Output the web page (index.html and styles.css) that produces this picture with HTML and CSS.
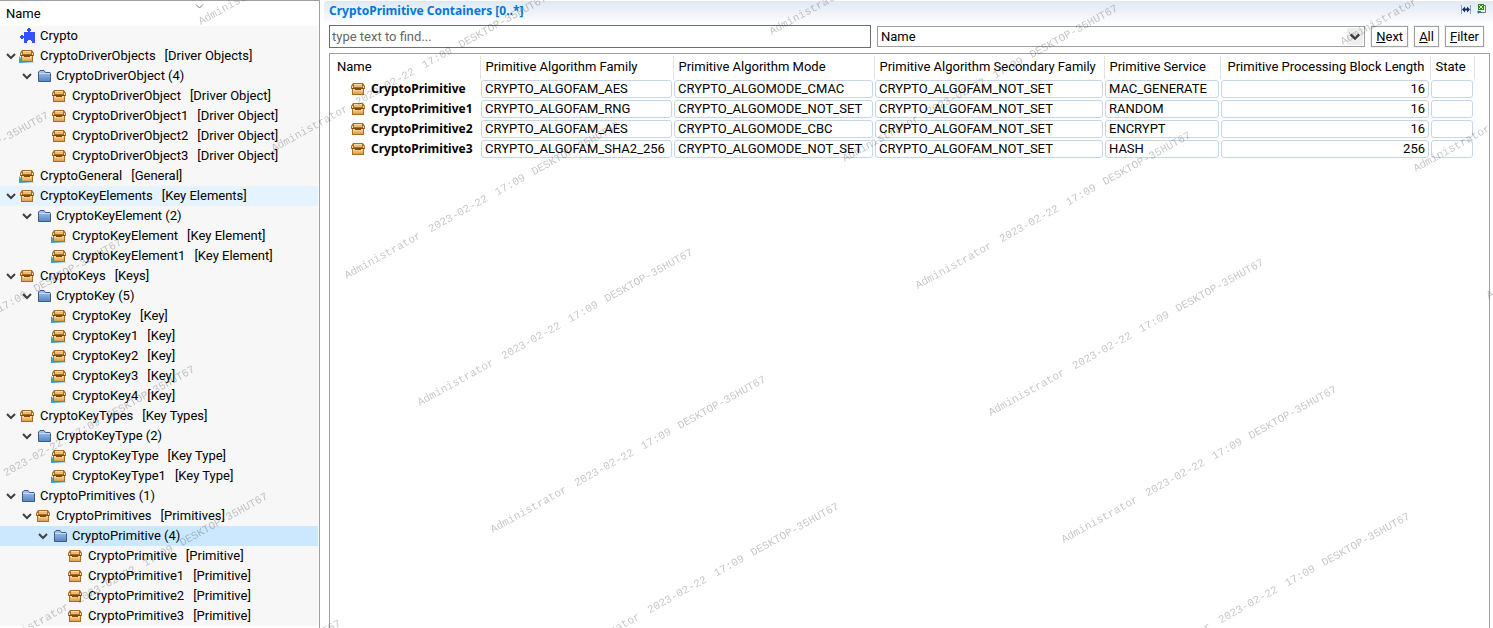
FILE: index.html
```html
<!DOCTYPE html>
<html lang="en">
<head>
    <meta charset="UTF-8">
    <meta name="viewport" content="width=device-width, initial-scale=1.0">
    <title>CryptoPrimitive Containers</title>
    <link rel="stylesheet" href="styles.css">
</head>
<body>
    <!-- Shared icons -->
    <svg class="defs" width="0" height="0" aria-hidden="true">
        <defs>
            <linearGradient id="wood" x1="0" y1="0" x2="0" y2="1">
                <stop offset="0" stop-color="#fbe0a8"/>
                <stop offset="1" stop-color="#d99a48"/>
            </linearGradient>
            <linearGradient id="blue" x1="0" y1="0" x2="0" y2="1">
                <stop offset="0" stop-color="#a9c8ee"/>
                <stop offset="1" stop-color="#5585c4"/>
            </linearGradient>
            <linearGradient id="teal" x1="0" y1="0" x2="1" y2="0">
                <stop offset="0" stop-color="#2f9fc8"/>
                <stop offset="1" stop-color="#d4edf6"/>
            </linearGradient>
            <symbol id="box" viewBox="0 0 16 16">
                <path d="M2 2h10l2 3v3h-1v6H1V8H0V5z" fill="#a86f24"/>
                <path d="M3 3h8v1H3z" fill="#f3dcab"/>
                <path d="M1 5h1v2H1zM12 5h1v2h-1z" fill="#f3dcab"/>
                <path d="M3 4h8v2H3z" fill="#e4bd7c"/>
                <path d="M1 7h12v1H1z" fill="#854a00"/>
                <path d="M2 8h10v5H2z" fill="url(#wood)"/>
                <path d="M4 8h6v1H4z" fill="#854a00"/>
            </symbol>
            <symbol id="boxlink" viewBox="0 0 16 16">
                <path d="M0 8v7h15v-2H4z" fill="url(#teal)"/>
                <use href="#box" x="1" y="0" width="16" height="16"/>
            </symbol>
            <symbol id="folder" viewBox="0 0 16 16">
                <path d="M2.500 13.500v-9.500l1.500-1.500h4l1.500 2h4.500l.5 1v8z" fill="url(#blue)" stroke="#3d5a86"/>
                <path d="M3 5.500h11" stroke="#c9dff7"/>
            </symbol>
            <symbol id="puzzle" viewBox="0 0 16 16">
                <path d="M4 4h4V3H7V1h1V0h2v1h1v2h-1v1h5v11h-3v-2h-1v-1H8v1H7v2H4v-5H3v1H1v-1H0V8h1V7h2v1h1z" fill="#3350fb"/>
            </symbol>
            <symbol id="chevron" viewBox="0 0 14 16">
                <path d="M3 6l4 4 4-4" fill="none" stroke="#404040" stroke-width="2"/>
            </symbol>
        </defs>
    </svg>

    <div class="app">
        <aside class="tree-panel">
            <div class="tree-head">
                <span>Name</span>
                <svg class="sort" width="9" height="5" viewBox="0 0 9 5"><path d="M1 0.500l3.500 3.500L8 0.500" fill="none" stroke="#777"/></svg>
            </div>
            <ul class="tree">
                <li class="node l0"><span class="twist"></span><svg class="icon"><use href="#puzzle"/></svg><span>Crypto</span></li>
                <li class="node l0"><button class="twist" aria-label="Collapse"><svg><use href="#chevron"/></svg></button><svg class="icon link"><use href="#boxlink"/></svg><span>CryptoDriverObjects</span><span class="type">[Driver Objects]</span></li>
                <li class="node l1"><button class="twist" aria-label="Collapse"><svg><use href="#chevron"/></svg></button><svg class="icon"><use href="#folder"/></svg><span>CryptoDriverObject (4)</span></li>
                <li class="node l2"><span class="twist"></span><svg class="icon"><use href="#box"/></svg><span>CryptoDriverObject</span><span class="type">[Driver Object]</span></li>
                <li class="node l2"><span class="twist"></span><svg class="icon"><use href="#box"/></svg><span>CryptoDriverObject1</span><span class="type">[Driver Object]</span></li>
                <li class="node l2"><span class="twist"></span><svg class="icon"><use href="#box"/></svg><span>CryptoDriverObject2</span><span class="type">[Driver Object]</span></li>
                <li class="node l2"><span class="twist"></span><svg class="icon"><use href="#box"/></svg><span>CryptoDriverObject3</span><span class="type">[Driver Object]</span></li>
                <li class="node l0"><span class="twist"></span><svg class="icon link"><use href="#boxlink"/></svg><span>CryptoGeneral</span><span class="type">[General]</span></li>
                <li class="node l0 hover"><button class="twist" aria-label="Collapse"><svg><use href="#chevron"/></svg></button><svg class="icon"><use href="#box"/></svg><span>CryptoKeyElements</span><span class="type">[Key Elements]</span></li>
                <li class="node l1"><button class="twist" aria-label="Collapse"><svg><use href="#chevron"/></svg></button><svg class="icon"><use href="#folder"/></svg><span>CryptoKeyElement (2)</span></li>
                <li class="node l2"><span class="twist"></span><svg class="icon link"><use href="#boxlink"/></svg><span>CryptoKeyElement</span><span class="type">[Key Element]</span></li>
                <li class="node l2"><span class="twist"></span><svg class="icon link"><use href="#boxlink"/></svg><span>CryptoKeyElement1</span><span class="type">[Key Element]</span></li>
                <li class="node l0"><button class="twist" aria-label="Collapse"><svg><use href="#chevron"/></svg></button><svg class="icon"><use href="#box"/></svg><span>CryptoKeys</span><span class="type">[Keys]</span></li>
                <li class="node l1"><button class="twist" aria-label="Collapse"><svg><use href="#chevron"/></svg></button><svg class="icon"><use href="#folder"/></svg><span>CryptoKey (5)</span></li>
                <li class="node l2"><span class="twist"></span><svg class="icon link"><use href="#boxlink"/></svg><span>CryptoKey</span><span class="type">[Key]</span></li>
                <li class="node l2"><span class="twist"></span><svg class="icon link"><use href="#boxlink"/></svg><span>CryptoKey1</span><span class="type">[Key]</span></li>
                <li class="node l2"><span class="twist"></span><svg class="icon link"><use href="#boxlink"/></svg><span>CryptoKey2</span><span class="type">[Key]</span></li>
                <li class="node l2"><span class="twist"></span><svg class="icon link"><use href="#boxlink"/></svg><span>CryptoKey3</span><span class="type">[Key]</span></li>
                <li class="node l2"><span class="twist"></span><svg class="icon link"><use href="#boxlink"/></svg><span>CryptoKey4</span><span class="type">[Key]</span></li>
                <li class="node l0"><button class="twist" aria-label="Collapse"><svg><use href="#chevron"/></svg></button><svg class="icon"><use href="#box"/></svg><span>CryptoKeyTypes</span><span class="type">[Key Types]</span></li>
                <li class="node l1"><button class="twist" aria-label="Collapse"><svg><use href="#chevron"/></svg></button><svg class="icon"><use href="#folder"/></svg><span>CryptoKeyType (2)</span></li>
                <li class="node l2"><span class="twist"></span><svg class="icon link"><use href="#boxlink"/></svg><span>CryptoKeyType</span><span class="type">[Key Type]</span></li>
                <li class="node l2"><span class="twist"></span><svg class="icon link"><use href="#boxlink"/></svg><span>CryptoKeyType1</span><span class="type">[Key Type]</span></li>
                <li class="node l0"><button class="twist" aria-label="Collapse"><svg><use href="#chevron"/></svg></button><svg class="icon"><use href="#folder"/></svg><span>CryptoPrimitives (1)</span></li>
                <li class="node l1"><button class="twist" aria-label="Collapse"><svg><use href="#chevron"/></svg></button><svg class="icon"><use href="#box"/></svg><span>CryptoPrimitives</span><span class="type">[Primitives]</span></li>
                <li class="node l2 selected"><button class="twist" aria-label="Collapse"><svg><use href="#chevron"/></svg></button><svg class="icon"><use href="#folder"/></svg><span>CryptoPrimitive (4)</span></li>
                <li class="node l3"><span class="twist"></span><svg class="icon"><use href="#box"/></svg><span>CryptoPrimitive</span><span class="type">[Primitive]</span></li>
                <li class="node l3"><span class="twist"></span><svg class="icon"><use href="#box"/></svg><span>CryptoPrimitive1</span><span class="type">[Primitive]</span></li>
                <li class="node l3"><span class="twist"></span><svg class="icon"><use href="#box"/></svg><span>CryptoPrimitive2</span><span class="type">[Primitive]</span></li>
                <li class="node l3"><span class="twist"></span><svg class="icon"><use href="#box"/></svg><span>CryptoPrimitive3</span><span class="type">[Primitive]</span></li>
            </ul>
        </aside>

        <main class="section">
            <header class="section-head">
                <h1>CryptoPrimitive Containers [0..*]</h1>
                <div class="tools">
                    <button aria-label="Fit columns">
                        <svg width="10" height="10" viewBox="0 0 10 10"><path d="M0.500 1v9M9.500 1v9" stroke="#8d9dc4"/><path d="M1 5.500l3-3v2h2v-2l3 3-3 3v-2H4v2z" fill="#0c2f6b"/></svg>
                    </button>
                    <button aria-label="Export">
                        <svg width="10" height="10" viewBox="0 0 10 10"><path d="M7 1.500h1.500v7H4" fill="none" stroke="#777"/><path d="M1 0h6v6H1z" fill="#2f8a12"/><path d="M2 1h1v1H2zM5 1h1v1H5zM3 2h2v2H3zM2 4h1v1H2zM5 4h1v1H5z" fill="#dff2d0"/><path d="M0 8l2-2v1h2v2H2v1z" fill="#2277b5"/></svg>
                    </button>
                </div>
            </header>

            <form class="search">
                <input type="text" class="find" placeholder="type text to find..." aria-label="Text to find">
                <div class="pick">
                    <select aria-label="Search column">
                        <option>Name</option>
                    </select>
                    <svg class="arrow" viewBox="0 0 14 16"><use href="#chevron"/></svg>
                </div>
                <button type="button"><u>N</u>ext</button>
                <button type="button"><u>A</u>ll</button>
                <button type="button"><u>F</u>ilter</button>
            </form>

            <div class="grid">
                <table>
                    <colgroup>
                        <col class="c-name"><col class="c-family"><col class="c-mode"><col class="c-second">
                        <col class="c-service"><col class="c-block"><col class="c-state"><col>
                    </colgroup>
                    <thead>
                        <tr>
                            <th>Name</th>
                            <th>Primitive Algorithm Family</th>
                            <th>Primitive Algorithm Mode</th>
                            <th>Primitive Algorithm Secondary Family</th>
                            <th>Primitive Service</th>
                            <th class="num">Primitive Processing Block Length</th>
                            <th>State</th>
                            <td></td>
                        </tr>
                    </thead>
                    <tbody>
                        <tr>
                            <td><div class="name"><svg class="icon"><use href="#box"/></svg>CryptoPrimitive</div></td>
                            <td><div class="cell">CRYPTO_ALGOFAM_AES</div></td>
                            <td><div class="cell">CRYPTO_ALGOMODE_CMAC</div></td>
                            <td><div class="cell">CRYPTO_ALGOFAM_NOT_SET</div></td>
                            <td><div class="cell">MAC_GENERATE</div></td>
                            <td><div class="cell num">16</div></td>
                            <td><div class="cell"></div></td>
                            <td></td>
                        </tr>
                        <tr>
                            <td><div class="name"><svg class="icon"><use href="#box"/></svg>CryptoPrimitive1</div></td>
                            <td><div class="cell">CRYPTO_ALGOFAM_RNG</div></td>
                            <td><div class="cell">CRYPTO_ALGOMODE_NOT_SET</div></td>
                            <td><div class="cell">CRYPTO_ALGOFAM_NOT_SET</div></td>
                            <td><div class="cell">RANDOM</div></td>
                            <td><div class="cell num">16</div></td>
                            <td><div class="cell"></div></td>
                            <td></td>
                        </tr>
                        <tr>
                            <td><div class="name"><svg class="icon"><use href="#box"/></svg>CryptoPrimitive2</div></td>
                            <td><div class="cell">CRYPTO_ALGOFAM_AES</div></td>
                            <td><div class="cell">CRYPTO_ALGOMODE_CBC</div></td>
                            <td><div class="cell">CRYPTO_ALGOFAM_NOT_SET</div></td>
                            <td><div class="cell">ENCRYPT</div></td>
                            <td><div class="cell num">16</div></td>
                            <td><div class="cell"></div></td>
                            <td></td>
                        </tr>
                        <tr>
                            <td><div class="name"><svg class="icon"><use href="#box"/></svg>CryptoPrimitive3</div></td>
                            <td><div class="cell">CRYPTO_ALGOFAM_SHA2_256</div></td>
                            <td><div class="cell">CRYPTO_ALGOMODE_NOT_SET</div></td>
                            <td><div class="cell">CRYPTO_ALGOFAM_NOT_SET</div></td>
                            <td><div class="cell">HASH</div></td>
                            <td><div class="cell num">256</div></td>
                            <td><div class="cell"></div></td>
                            <td></td>
                        </tr>
                    </tbody>
                </table>
            </div>
        </main>
    </div>

    <!-- Session watermark over the whole window -->
    <svg class="watermark" aria-hidden="true">
        <defs>
            <text id="mark" transform="rotate(-29)"><tspan x="2">Administrator</tspan><tspan x="98">2023-02-22</tspan><tspan x="174">17:09</tspan><tspan x="216">DESKTOP-35HUT67</tspan></text>
        </defs>
        <use href="#mark" x="-226" y="270"/>
        <use href="#mark" x="-153" y="397"/>
        <use href="#mark" x="-80" y="524"/>
        <use href="#mark" x="-7" y="651"/>
        <use href="#mark" x="66" y="778"/>
        <use href="#mark" x="199" y="26"/>
        <use href="#mark" x="272" y="153"/>
        <use href="#mark" x="345" y="280"/>
        <use href="#mark" x="418" y="407"/>
        <use href="#mark" x="491" y="534"/>
        <use href="#mark" x="564" y="661"/>
        <use href="#mark" x="770" y="36"/>
        <use href="#mark" x="843" y="163"/>
        <use href="#mark" x="916" y="290"/>
        <use href="#mark" x="989" y="417"/>
        <use href="#mark" x="1062" y="544"/>
        <use href="#mark" x="1135" y="671"/>
        <use href="#mark" x="1341" y="46"/>
        <use href="#mark" x="1414" y="173"/>
        <use href="#mark" x="1487" y="300"/>
    </svg>
</body>
</html>
```
FILE: styles.css
```css
* {
    box-sizing: border-box;
}
body {
    margin: 0;
    font-family: Roboto, "Open Sans", sans-serif;
    font-size: 13px;
    line-height: 20px;
    color: #000;
    background: #fff;
    overflow: hidden;
}
button {
    font: inherit;
    color: inherit;
    padding: 0;
    border: 0;
    background: none;
}
.defs {
    position: absolute;
}
.app {
    display: flex;
    height: 100vh;
}

/* Tree */
.tree-panel {
    flex: 0 0 320px;
    border-top: 1px solid #a0a0a4;
    border-right: 1px solid #a0a0a4;
    overflow: hidden;
    padding-right: 1px;
}
.tree-head {
    display: grid;
    grid-template-columns: 1fr auto 1fr;
    height: 25px;
    padding: 3px 0 0 6px;
}
.sort {
    margin-left: 74px;
}
.tree {
    list-style: none;
    margin: 0;
    padding: 0;
    background: #f7f7f7;
}
.node {
    display: flex;
    align-items: center;
    height: 20px;
    white-space: nowrap;
}
.l0 { padding-left: 4px; }
.l1 { padding-left: 20px; }
.l2 { padding-left: 36px; }
.l3 { padding-left: 52px; }
.hover {
    background: #e5f3ff;
}
.selected {
    background: #cce8ff;
}
.twist {
    width: 14px;
    height: 16px;
    margin-right: 2px;
}
.twist svg {
    display: block;
    width: 14px;
    height: 16px;
}
.icon {
    flex: none;
    width: 16px;
    height: 16px;
    margin-right: 4px;
}
.icon.link {
    margin-left: -1px;
    margin-right: 5px;
}
.type {
    margin-left: 9px;
}

/* Section */
.section {
    flex: 1;
    min-width: 0;
    display: flex;
    flex-direction: column;
    margin: 1px 0 0 4px;
    padding: 0 3px 0 5px;
    background: linear-gradient(#dfe8f3, #fff 24px);
    border-top-left-radius: 4px;
}
.section-head {
    display: flex;
    justify-content: space-between;
    height: 24px;
    padding-right: 3px;
}
h1 {
    margin: 0;
    font-family: "Noto Sans", sans-serif;
    font-size: 12px;
    line-height: 20px;
    color: #0078d7;
}
.tools {
    display: flex;
    gap: 6px;
    padding-top: 3px;
}
.tools button {
    width: 10px;
    height: 10px;
}
.tools svg {
    display: block;
}
.search {
    display: flex;
    align-items: center;
    gap: 6px;
    height: 23px;
    padding-right: 6px;
}
.find {
    flex: 539 1 0;
    min-width: 0;
    height: 23px;
    padding: 0 2px;
    font: inherit;
    border: 1px solid #6e6e6e;
    background: #fff;
}
.find::placeholder {
    color: #666;
    opacity: 1;
}
.pick {
    flex: 491 1 0;
    position: relative;
    display: flex;
}
.pick select {
    width: 100%;
    height: 21px;
    padding: 0 3px;
    font: inherit;
    appearance: none;
    border: 1px solid #a0a0a4;
    border-radius: 0;
    background: #fff;
}
.arrow {
    position: absolute;
    right: 2px;
    top: 2px;
    width: 16px;
    height: 17px;
    background: #eee;
    pointer-events: none;
}
.search button {
    height: 21px;
    padding: 0 4px;
    line-height: 19px;
    border: 1px solid #a0a0a4;
    background: #fff;
    box-shadow: 0 0 0 1px #f0f0f0;
}

/* Grid */
.grid {
    flex: 1;
    margin-top: 5px;
    padding: 2px 1px;
    border: 1px solid #a0a0a4;
    border-bottom: 0;
    background: #fff;
}
table {
    width: 100%;
    table-layout: fixed;
    border-collapse: collapse;
}
.c-name { width: 149px; }
.c-family { width: 193px; }
.c-mode { width: 201px; }
.c-second { width: 230px; }
.c-service { width: 116px; }
.c-block { width: 210px; }
.c-state { width: 44px; }
th {
    height: 23px;
    padding: 0 5px 2px;
    font-weight: normal;
    text-align: left;
    white-space: nowrap;
    border-right: 1px solid #e2e2e2;
}
th:first-child {
    padding-left: 6px;
}
td {
    height: 20px;
    padding: 0 1px;
}
.num {
    text-align: right;
}
.cell {
    height: 18px;
    padding: 0 3px;
    line-height: 16px;
    white-space: nowrap;
    border: 1px solid #c6d6e6;
    border-radius: 3px;
}
.name {
    display: flex;
    align-items: center;
    padding-left: 19px;
    font-family: "Noto Sans", sans-serif;
    font-size: 12px;
    font-weight: bold;
}

.watermark {
    position: fixed;
    top: 0;
    left: 0;
    width: 100%;
    height: 100%;
    pointer-events: none;
    font-family: "Liberation Mono", monospace;
    font-size: 11px;
    fill: #000;
    opacity: 0.23;
}
```
